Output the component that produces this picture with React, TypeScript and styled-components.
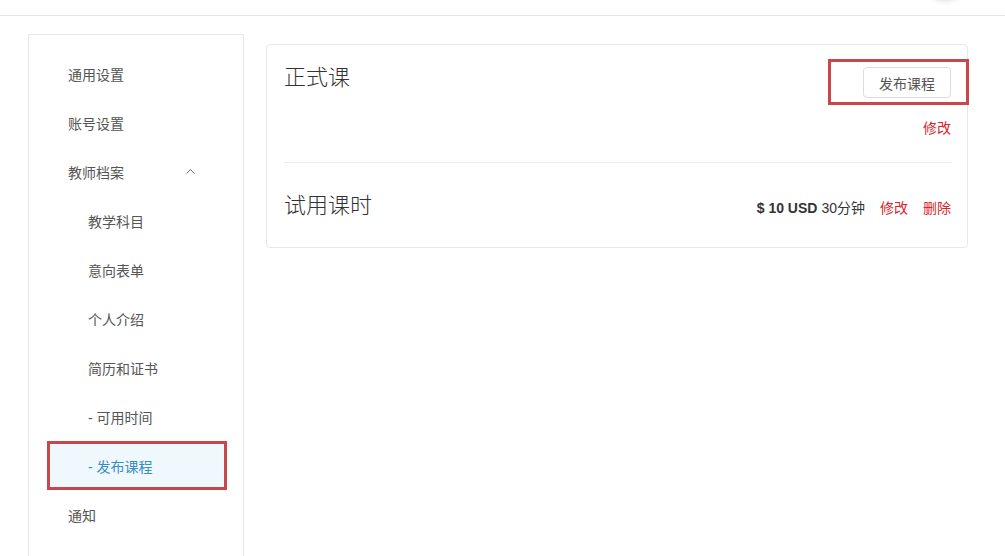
import React from 'react'
import styled, { createGlobalStyle } from 'styled-components'
import { ChevronUp } from 'lucide-react'

const GlobalStyle = createGlobalStyle`
  html, body {
    margin: 0;
    padding: 0;
    background: #fff;
    font-family: "Liberation Sans", "Noto Sans CJK SC", sans-serif;
    color: #333;
    overflow: hidden;
  }
`

type MenuEntry = { label: string; sub?: boolean; active?: boolean; chevron?: boolean }

const menu: MenuEntry[] = [
  { label: '通用设置' },
  { label: '账号设置' },
  { label: '教师档案', chevron: true },
  { label: '教学科目', sub: true },
  { label: '意向表单', sub: true },
  { label: '个人介绍', sub: true },
  { label: '简历和证书', sub: true },
  { label: '- 可用时间', sub: true },
  { label: '- 发布课程', sub: true, active: true },
  { label: '通知' },
]

export default function App() {
  return (
    <>
      <GlobalStyle />
      <Header>
        <Avatar />
      </Header>
      <Page>
        <Sidebar>
          <MenuList>
            {menu.map((m) => (
              <MenuItem key={m.label} $sub={m.sub} $active={m.active}>
                {m.label}
                {m.chevron && (
                  <Chevron>
                    <ChevronUp size={15} strokeWidth={1.6} />
                  </Chevron>
                )}
              </MenuItem>
            ))}
          </MenuList>
        </Sidebar>
        <Card>
          <Section $top={22} $bottom={24}>
            <Row>
              <Title>正式课</Title>
              <Marked>
                <PublishButton>发布课程</PublishButton>
              </Marked>
            </Row>
            <EditRow>
              <RedLink>修改</RedLink>
            </EditRow>
          </Section>
          <Divider />
          <Section $top={32} $bottom={29}>
            <Row>
              <Title>试用课时</Title>
              <Info>
                <Price>$ 10 USD</Price>
                <span>30分钟</span>
                <RedLink>修改</RedLink>
                <RedLink>删除</RedLink>
              </Info>
            </Row>
          </Section>
        </Card>
      </Page>
    </>
  )
}

const Header = styled.div`
  height: 15px;
  border-bottom: 1px solid #e4e4e4;
  display: flex;
  justify-content: flex-end;
  padding-right: 40px;
`

const Avatar = styled.div`
  width: 40px;
  height: 40px;
  border-radius: 50%;
  background: #fff;
  margin-top: -42px;
  box-shadow: 0 2px 6px rgba(0, 0, 0, 0.18);
`

const Page = styled.div`
  display: flex;
  align-items: flex-start;
  gap: 22px;
  padding: 18px 37px 0 28px;
`

const Sidebar = styled.div`
  width: 214px;
  height: 522px;
  border: 1px solid #e8e8e8;
  border-bottom: none;
  flex-shrink: 0;
`

const MenuList = styled.div`
  display: flex;
  flex-direction: column;
  padding: 14px 16px 0 18px;
`

const MenuItem = styled.div<{ $sub?: boolean; $active?: boolean }>`
  display: flex;
  align-items: center;
  height: 49px;
  padding-left: ${(p) => (p.$sub ? 41 : 21)}px;
  font-size: 14px;
  color: ${(p) => (p.$active ? '#3a8cc4' : '#555')};
  background: ${(p) => (p.$active ? '#eff8fd' : 'transparent')};
  box-shadow: ${(p) => (p.$active ? 'inset 0 0 0 3px #c8474b' : 'none')};
`

const Chevron = styled.span`
  display: flex;
  margin-left: auto;
  margin-right: 29px;
  color: #666;
`

const Card = styled.div`
  flex: 1;
  margin-top: 10px;
  border: 1px solid #e8e8e8;
  border-radius: 4px;
  padding: 0 16px 0 17px;
`

const Section = styled.div<{ $top: number; $bottom: number }>`
  padding-top: ${(p) => p.$top}px;
  padding-bottom: ${(p) => p.$bottom}px;
`

const Row = styled.div`
  display: flex;
  justify-content: space-between;
  align-items: flex-start;
`

const Title = styled.div`
  font-size: 22px;
  line-height: 22px;
  font-weight: 300;
  color: #333;
`

const Marked = styled.div`
  position: relative;
  &::after {
    content: '';
    position: absolute;
    left: -35px;
    right: -18px;
    top: -8px;
    bottom: -7px;
    border: 3px solid #c8474b;
    pointer-events: none;
  }
`

const PublishButton = styled.button`
  height: 31px;
  width: 88px;
  border: 1px solid #dcdcdc;
  border-radius: 4px;
  background: #fff;
  font-family: inherit;
  font-size: 14px;
  color: #555;
  padding: 0;
`

const EditRow = styled.div`
  display: flex;
  justify-content: flex-end;
  margin-top: 20px;
  line-height: 20px;
`

const RedLink = styled.span`
  color: #d6262d;
  font-size: 14px;
`

const Divider = styled.div`
  height: 1px;
  background: #ececec;
`

const Info = styled.div`
  display: flex;
  align-items: center;
  gap: 15px;
  margin-top: 3px;
  font-size: 14px;
  color: #333;
  line-height: 20px;
`

const Price = styled.b`
  margin-right: -11px;
`
